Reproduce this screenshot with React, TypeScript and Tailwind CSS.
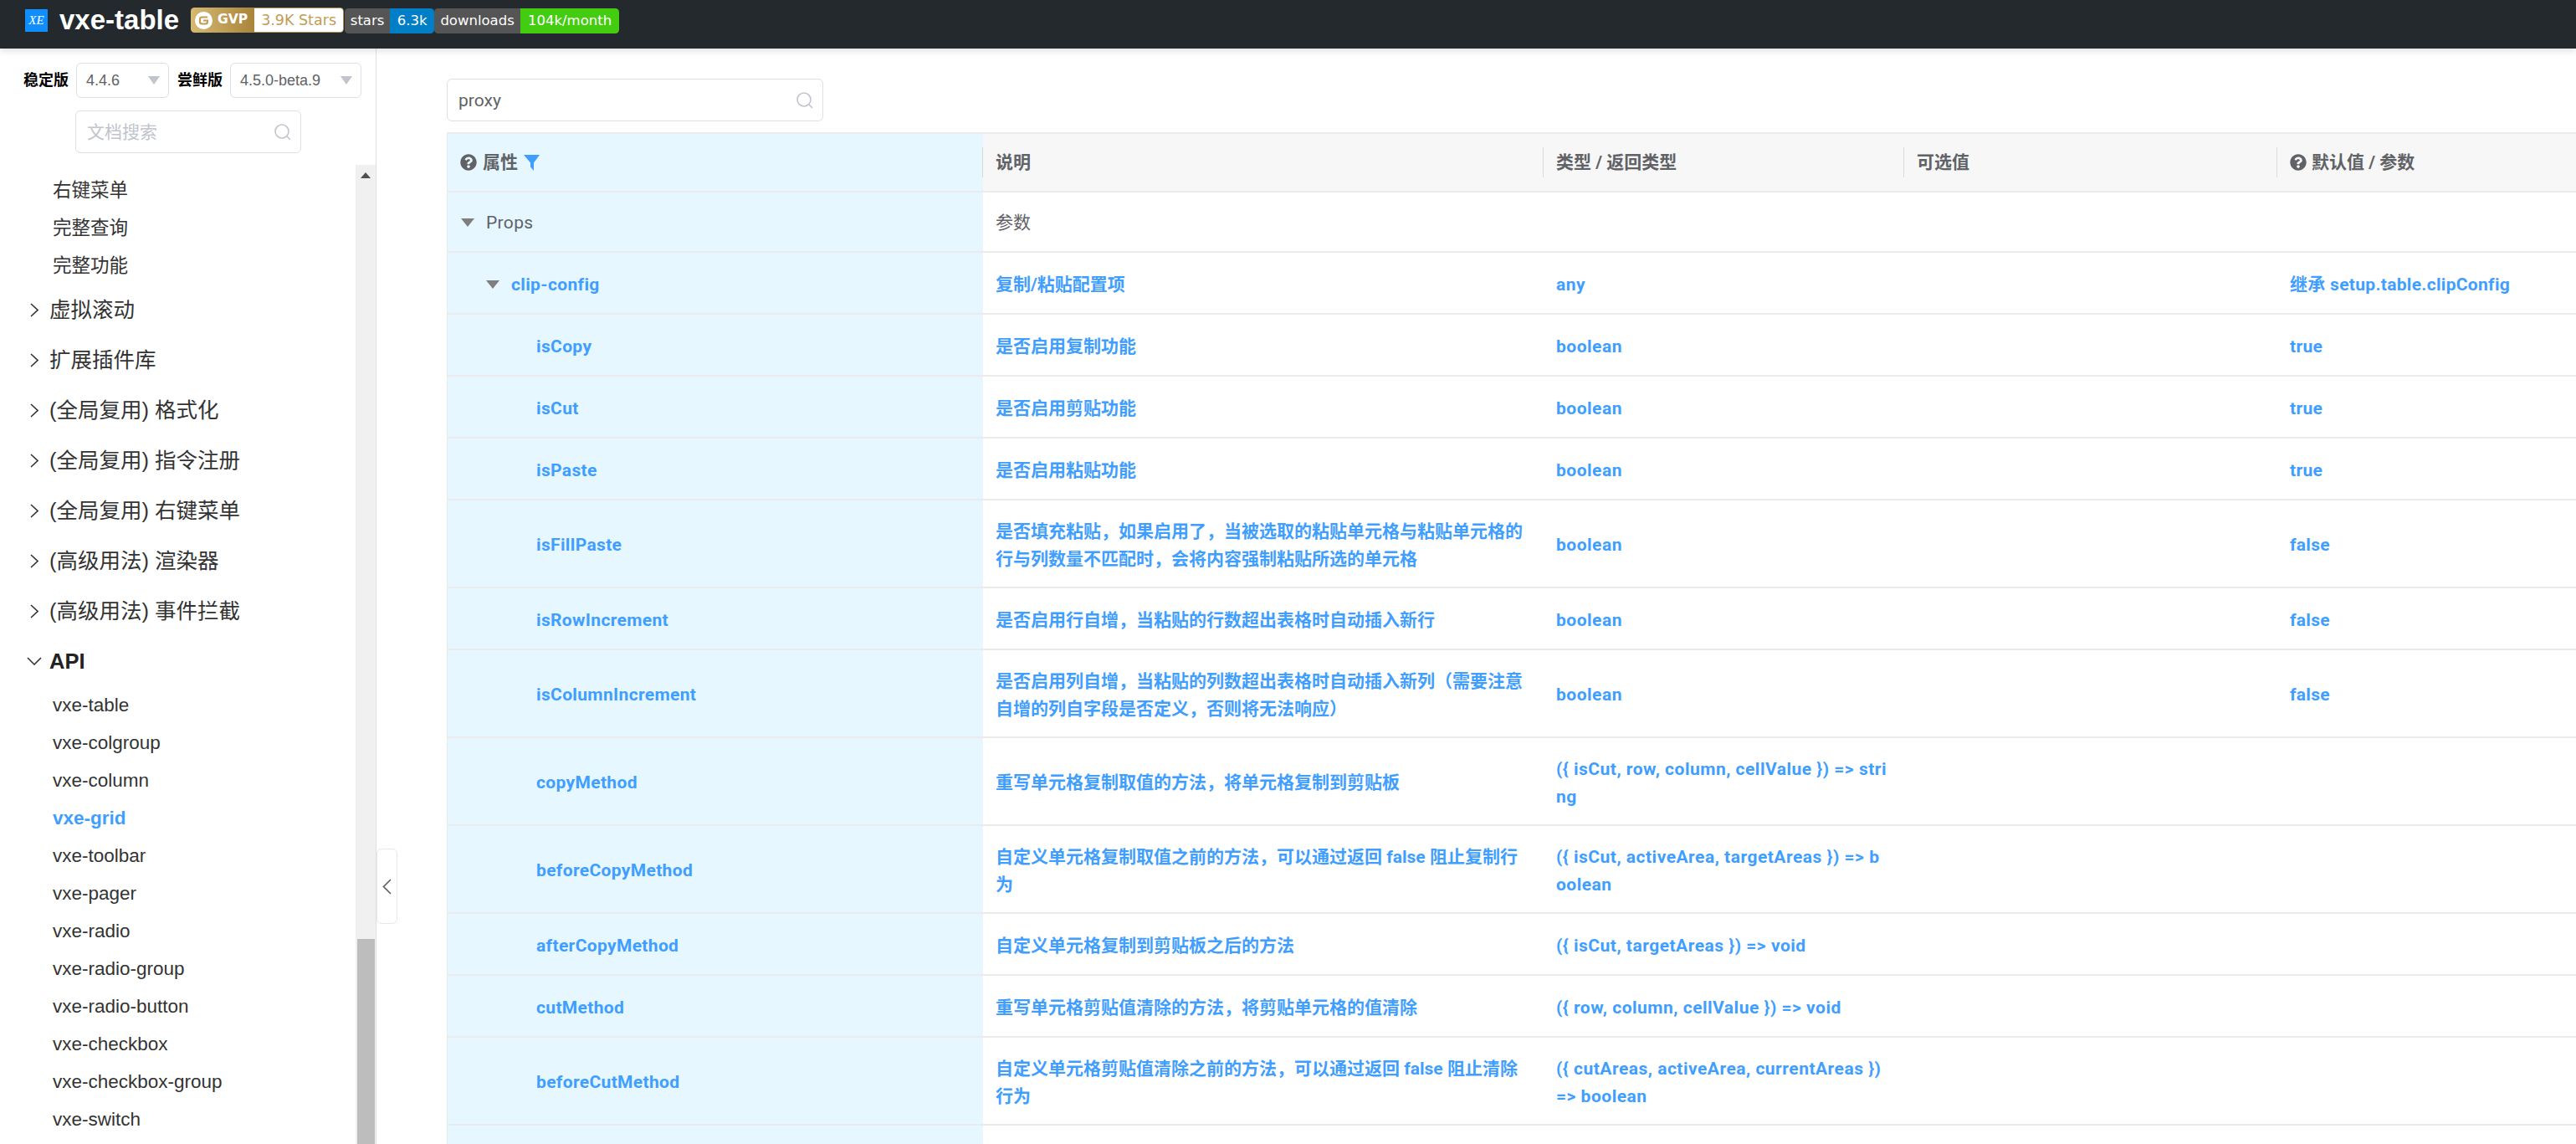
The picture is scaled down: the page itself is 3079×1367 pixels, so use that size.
import { FaQuestionCircle } from "react-icons/fa"

type Row = {
  name: string
  indent: string
  arrow?: boolean
  muted?: boolean
  desc: string
  type?: string
  def?: string
  short?: boolean
}

const rows: Row[] = [
  { name: "Props", indent: "pl-[16px]", arrow: true, muted: true, desc: "参数", short: true },
  { name: "clip-config", indent: "pl-[46px]", arrow: true, desc: "复制/粘贴配置项", type: "any", def: "继承 setup.table.clipConfig" },
  { name: "isCopy", indent: "pl-[106px]", desc: "是否启用复制功能", type: "boolean", def: "true" },
  { name: "isCut", indent: "pl-[106px]", desc: "是否启用剪贴功能", type: "boolean", def: "true" },
  { name: "isPaste", indent: "pl-[106px]", desc: "是否启用粘贴功能", type: "boolean", def: "true" },
  {
    name: "isFillPaste",
    indent: "pl-[106px]",
    desc: "是否填充粘贴，如果启用了，当被选取的粘贴单元格与粘贴单元格的\n行与列数量不匹配时，会将内容强制粘贴所选的单元格",
    type: "boolean",
    def: "false",
  },
  { name: "isRowIncrement", indent: "pl-[106px]", desc: "是否启用行自增，当粘贴的行数超出表格时自动插入新行", type: "boolean", def: "false" },
  {
    name: "isColumnIncrement",
    indent: "pl-[106px]",
    desc: "是否启用列自增，当粘贴的列数超出表格时自动插入新列（需要注意\n自增的列自字段是否定义，否则将无法响应）",
    type: "boolean",
    def: "false",
  },
  { name: "copyMethod", indent: "pl-[106px]", desc: "重写单元格复制取值的方法，将单元格复制到剪贴板", type: "({ isCut, row, column, cellValue }) => stri\nng" },
  {
    name: "beforeCopyMethod",
    indent: "pl-[106px]",
    desc: "自定义单元格复制取值之前的方法，可以通过返回 false 阻止复制行\n为",
    type: "({ isCut, activeArea, targetAreas }) => b\noolean",
  },
  { name: "afterCopyMethod", indent: "pl-[106px]", desc: "自定义单元格复制到剪贴板之后的方法", type: "({ isCut, targetAreas }) => void" },
  { name: "cutMethod", indent: "pl-[106px]", desc: "重写单元格剪贴值清除的方法，将剪贴单元格的值清除", type: "({ row, column, cellValue }) => void" },
  {
    name: "beforeCutMethod",
    indent: "pl-[106px]",
    desc: "自定义单元格剪贴值清除之前的方法，可以通过返回 false 阻止清除\n行为",
    type: "({ cutAreas, activeArea, currentAreas })\n=> boolean",
  },
]

const groups = ["虚拟滚动", "扩展插件库", "(全局复用) 格式化", "(全局复用) 指令注册", "(全局复用) 右键菜单", "(高级用法) 渲染器", "(高级用法) 事件拦截"]
const apis = ["vxe-table", "vxe-colgroup", "vxe-column", "vxe-grid", "vxe-toolbar", "vxe-pager", "vxe-radio", "vxe-radio-group", "vxe-radio-button", "vxe-checkbox", "vxe-checkbox-group", "vxe-switch"]

function SearchIcon() {
  return (
    <svg width="20" height="20" viewBox="0 0 20 20" fill="none" stroke="#c0c4cc" strokeWidth="1.6">
      <circle cx="9" cy="9" r="8" />
      <path d="M14.8 14.8 19 19" />
    </svg>
  )
}

function Caret({ className }: { className: string }) {
  return (
    <svg width="14" height="10" viewBox="0 0 14 10" className={className}>
      <path d="M0 0H14L7 10Z" fill="#c0c4cc" />
    </svg>
  )
}

function TreeArrow() {
  return (
    <svg width="16" height="10" viewBox="0 0 16 10" className="shrink-0">
      <path d="M0 0H16L8 10Z" fill="#7f7f7f" />
    </svg>
  )
}

function Chevron() {
  return (
    <svg width="10" height="17" viewBox="0 0 10 17" fill="none" stroke="#333" strokeWidth="1.6" className="shrink-0">
      <path d="M1 1 9 8.5 1 16" />
    </svg>
  )
}

function VersionSelect({ value, width }: { value: string; width: string }) {
  return (
    <div className={`${width} ml-[9px] flex h-[42px] items-center rounded-[6px] border-[1.5px] border-[#dcdfe6] pl-[11px] pr-[10px] text-[18px] text-[#606266]`}>
      {value}
      <Caret className="ml-auto" />
    </div>
  )
}

function HeadCell({ children, icon, last }: { children: React.ReactNode; icon?: boolean; last?: boolean }) {
  return (
    <div className="flex items-center pl-[15px] text-[21px] font-bold text-[#606266]">
      {icon && <FaQuestionCircle className="mr-[6px] h-[20px] w-[20px]" />}
      <span className="pt-[2px]">{children}</span>
      {!last && <span className="ml-auto h-[36px] w-[1.5px] bg-[#dcdcdc]" />}
    </div>
  )
}

export default function App() {
  return (
    <div className="h-[1367px] w-[3079px] overflow-hidden bg-white font-['Liberation_Sans','Noto_Sans_CJK_SC',sans-serif]">
      {/* top bar */}
      <header className="relative z-10 flex h-[58px] items-start bg-[#24292e] pl-[30px] pt-[9px] shadow-[0_3px_8px_rgba(0,0,0,0.12)]">
        <div className="mt-[2px] flex h-[27px] w-[27px] items-center justify-center bg-[#0f8fff] font-['Liberation_Serif',serif] text-[15px] italic text-white">
          XE
        </div>
        <h1 className="ml-[14px] text-[33px] font-bold leading-[29px] text-white">vxe-table</h1>
        <div className="ml-[14px] flex h-[30px] w-[183px] overflow-hidden rounded-[4.5px] font-['DejaVu_Sans',sans-serif]">
          <div className="flex w-[76px] items-center gap-[6px] bg-gradient-to-r from-[#d6ba72] to-[#a9843b] pl-[5px]">
            <svg width="21" height="21" viewBox="0 0 21 21" className="shrink-0">
              <circle cx="10.5" cy="10.5" r="10.5" fill="#fff" />
              <path d="M15 6.5H8.5Q6 6.5 6 9V12Q6 14.5 8.5 14.5H12.5Q15 14.5 15 12V10.5H10" fill="none" stroke="#bf9d55" strokeWidth="2.2" />
            </svg>
            <span className="text-[15.5px] font-bold text-white">GVP</span>
          </div>
          <div className="flex flex-1 items-center justify-center rounded-r-[4.5px] border-y-[1.5px] border-r-[1.5px] border-[#b3924f] bg-white text-[17.5px] text-[#c19c57]">
            3.9K Stars
          </div>
        </div>
        <div className="ml-px mt-px flex h-[30px] overflow-hidden rounded-[4.5px] font-['DejaVu_Sans',sans-serif] text-[16.5px] text-white">
          <span className="flex w-[54px] items-center justify-center bg-[#555]">stars</span>
          <span className="flex w-[53px] items-center justify-center bg-[#007ec6]">6.3k</span>
        </div>
        <div className="mt-px flex h-[30px] overflow-hidden rounded-[4.5px] font-['DejaVu_Sans',sans-serif] text-[16.5px] text-white">
          <span className="flex w-[103px] items-center justify-center bg-[#555]">downloads</span>
          <span className="flex w-[118px] items-center justify-center bg-[#44cc11]">104k/month</span>
        </div>
      </header>

      <div className="flex h-[1309px]">
        {/* left nav */}
        <aside className="flex w-[450px] shrink-0 flex-col border-r border-[#e0e0e0]">
          <div className="flex items-center pl-[28px] pt-[17px]">
            <span className="w-[54px] text-[18px] font-bold text-black">稳定版</span>
            <VersionSelect value="4.4.6" width="w-[111px]" />
            <span className="ml-[10px] w-[54px] text-[18px] font-bold text-black">尝鲜版</span>
            <VersionSelect value="4.5.0-beta.9" width="w-[157px]" />
          </div>
          <div className="ml-[90px] mt-[15px] flex h-[51px] w-[270px] items-center rounded-[6px] border-[1.5px] border-[#dcdfe6] pl-[13px] pr-[11px] text-[21px] text-[#c0c4cc]">
            文档搜索
            <span className="ml-auto">
              <SearchIcon />
            </span>
          </div>
          <div className="mt-[14px] flex min-h-0 flex-1">
            <nav className="flex-1 overflow-hidden pt-[8px] text-[#333]">
              {["右键菜单", "完整查询", "完整功能"].map((t) => (
                <div key={t} className="flex h-[45px] items-center pl-[63px] text-[22.5px]">
                  {t}
                </div>
              ))}
              {groups.map((g) => (
                <div key={g} className="flex h-[60px] items-center gap-[13px] pl-[36px] text-[25.5px]">
                  <Chevron />
                  {g}
                </div>
              ))}
              <div className="flex h-[60px] items-center gap-[9px] pl-[32px] text-[25.5px] font-bold text-[#222]">
                <svg width="18" height="10" viewBox="0 0 18 10" fill="none" stroke="#333" strokeWidth="1.6" className="shrink-0">
                  <path d="M1 1 9 9 17 1" />
                </svg>
                API
              </div>
              {apis.map((a) => (
                <div key={a} className={`flex h-[45px] items-center pl-[63px] text-[22.5px] ${a === "vxe-grid" ? "font-bold text-[#409eff]" : ""}`}>
                  {a}
                </div>
              ))}
            </nav>
            <div className="flex w-[24px] flex-col items-center justify-between bg-[#f0f0f0] pt-[9px]">
              <svg width="12" height="7" viewBox="0 0 12 7">
                <path d="M6 0 12 7H0Z" fill="#505050" />
              </svg>
              <div className="h-[245px] w-[21px] bg-[#bdbdbd]" />
            </div>
          </div>
        </aside>

        {/* content */}
        <main className="relative min-w-0 flex-1 overflow-hidden pl-[84px] pt-[36px] font-['Roboto','Noto_Sans_CJK_SC',sans-serif]">
          <div className="absolute left-0 top-[956px] flex h-[90px] w-[25px] items-center justify-center rounded-[6px] border border-[#e4e7ed] bg-white">
            <svg width="11" height="19" viewBox="0 0 11 19" fill="none" stroke="#606266" strokeWidth="1.7">
              <path d="M10 1 1.5 9.5 10 18" />
            </svg>
          </div>

          <div className="flex h-[51px] w-[450px] items-center rounded-[6px] border-[1.5px] border-[#dcdfe6] pl-[13px] pr-[11px] text-[21px] text-[#606266]">
            <span className="pt-[2px]">proxy</span>
            <span className="ml-auto">
              <SearchIcon />
            </span>
          </div>

          <div className="mt-[13px] border-l border-[#e8eaec]">
            <div className="grid h-[72px] grid-cols-[640px_670px_431px_446px_357px] border-y-2 border-[#ebebeb] bg-[#f7f7f7]">
              <div className="flex items-center bg-[#e6f7ff] pl-[15px] text-[21px] font-bold text-[#606266]">
                <FaQuestionCircle className="mr-[7px] h-[20px] w-[20px]" />
                <span className="pt-[2px]">属性</span>
                <svg width="19" height="19" viewBox="0 0 19 19" className="ml-[7px]">
                  <path d="M0 0H19L12 9.5V19L8 14.5V9.5Z" fill="#409eff" />
                </svg>
                <span className="ml-auto h-[36px] w-[1.5px] bg-[#d5dadd]" />
              </div>
              <HeadCell>说明</HeadCell>
              <HeadCell>类型 / 返回类型</HeadCell>
              <HeadCell>可选值</HeadCell>
              <HeadCell icon last>
                默认值 / 参数
              </HeadCell>
            </div>

            {rows.map((r) => (
              <div
                key={r.name}
                className={`grid grid-cols-[640px_670px_431px_446px_357px] border-b-2 border-[#ebebeb] text-[21px] leading-[33px] ${r.muted ? "font-normal text-[#606266]" : "font-bold text-[#409eff]"} ${r.short ? "min-h-[71px]" : "min-h-[74px]"}`}
              >
                <div className={`flex items-center bg-[#e6f7ff] ${r.short ? "pt-[2px]" : "pt-[4px]"} tracking-[0.35px] ${r.indent}`}>
                  {r.arrow && (
                    <span className="w-[30px] shrink-0">
                      <TreeArrow />
                    </span>
                  )}
                  {r.name}
                </div>
                <div className={`flex items-center whitespace-pre px-[15px] ${r.short ? "pb-[17.5px] pt-[19.5px]" : "pb-[16.5px] pt-[20.5px]"}`}>{r.desc}</div>
                <div className="flex items-center whitespace-pre px-[15px] pb-[16.5px] pt-[20.5px] tracking-[0.5px]">{r.type}</div>
                <div />
                <div className="flex items-center px-[15px] pb-[16.5px] pt-[20.5px] tracking-[0.3px]">{r.def}</div>
              </div>
            ))}
            <div className="h-[24px] w-[640px] bg-[#e6f7ff]" />
          </div>
        </main>
      </div>
    </div>
  )
}
